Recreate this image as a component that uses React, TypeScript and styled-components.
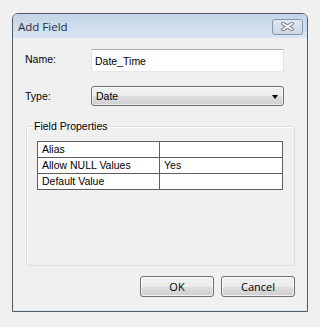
import React from 'react';
import styled, { createGlobalStyle } from 'styled-components';

const GlobalStyle = createGlobalStyle`
  html, body {
    margin: 0;
    padding: 0;
    background: #f0f0f0;
  }
  body {
    width: 320px;
    height: 327px;
    overflow: hidden;
    font-family: "Liberation Sans", Arial, sans-serif;
  }
`;

const Page = styled.div`
  padding: 13px 12px 0 12px;
`;

const Window = styled.div`
  width: 296px;
  height: 299px;
  box-sizing: border-box;
  border: 1px solid #555b64;
  border-radius: 6px 6px 0 0;
  background: #f0f0f0;
  display: flex;
  flex-direction: column;
  box-shadow: inset 0 -1px 0 #dbe5f0;
`;

const TitleBar = styled.div`
  height: 24px;
  flex: none;
  display: flex;
  align-items: center;
  justify-content: space-between;
  padding: 0 4px 0 5px;
  border-radius: 5px 5px 0 0;
  background: linear-gradient(#c3d3e5, #dae5f2);
`;

const Title = styled.span`
  font-family: "Open Sans", "Noto Sans", sans-serif;
  font-size: 11.5px;
  color: #1f2d3f;
  padding-top: 1px;
`;

const CloseButton = styled.div`
  width: 31px;
  height: 16px;
  box-sizing: border-box;
  margin-top: 1px;
  border: 1px solid #8595ad;
  border-radius: 3px;
  background: linear-gradient(#dfe7f1, #cbd7e6);
  display: flex;
  align-items: center;
  justify-content: center;
`;

const Content = styled.div`
  flex: 1;
  display: flex;
  flex-direction: column;
  padding: 11px 12px 14px 12px;
`;

const FieldRow = styled.div<{ $gap?: number }>`
  display: flex;
  align-items: flex-start;
  margin-bottom: ${p => p.$gap ?? 0}px;
`;

const Label = styled.div`
  width: 66px;
  flex: none;
  padding-top: 4px;
  font-size: 10.5px;
  color: #000;
`;

const TextInput = styled.div`
  width: 193px;
  height: 23px;
  box-sizing: border-box;
  border: 1px solid;
  border-color: #abadb3 #dbdfe6 #e3e9ef #e2e3ea;
  background: #fff;
  padding: 0 3px;
  display: flex;
  align-items: center;
  font-size: 10.5px;
  color: #000;
`;

const Select = styled.div`
  width: 193px;
  height: 20px;
  box-sizing: border-box;
  border: 1px solid #707070;
  border-radius: 3px;
  background: linear-gradient(#f2f2f2 0%, #ebebeb 50%, #dddddd 51%, #cfcfcf 100%);
  box-shadow: inset 0 0 0 1px rgba(255, 255, 255, 0.6);
  padding: 0 5px 0 4px;
  display: flex;
  align-items: center;
  justify-content: space-between;
  font-size: 10.5px;
  color: #000;
`;

const Arrow = styled.span`
  width: 0;
  height: 0;
  border-left: 3.5px solid transparent;
  border-right: 3.5px solid transparent;
  border-top: 4px solid #000;
  margin-top: 2px;
`;

const GroupBox = styled.fieldset`
  flex: 1;
  margin: 14px 0 0 1px;
  padding: 0 11px 0 10px;
  border: 1px solid #d5dfe5;
  border-radius: 3px;
  box-shadow: inset 1px 1px 0 #fff;
  min-width: 0;
`;

const Legend = styled.legend`
  margin-left: -4px;
  padding: 0 1px;
  font-size: 10.5px;
  line-height: 13px;
  color: #000;
`;

const PropTable = styled.table`
  margin-top: 8px;
  width: 246px;
  border-collapse: collapse;
  background: #fff;
  font-size: 10.5px;
`;

const Cell = styled.td<{ $w?: number }>`
  border: 1px solid #5f5f5f;
  height: 15px;
  padding: 0 3px 0 4px;
  line-height: 15px;
  width: ${p => (p.$w ? `${p.$w}px` : 'auto')};
  color: #000;
`;

const ButtonRow = styled.div`
  display: flex;
  justify-content: flex-end;
  gap: 7px;
  margin-top: 10px;
`;

const Button = styled.div`
  width: 74px;
  height: 21px;
  box-sizing: border-box;
  border: 1px solid #707070;
  border-radius: 3px;
  background: linear-gradient(#f2f2f2 0%, #ebebeb 50%, #dddddd 51%, #cfcfcf 100%);
  box-shadow: inset 0 0 0 1px rgba(255, 255, 255, 0.7);
  display: flex;
  align-items: center;
  justify-content: center;
  font-family: "Open Sans", "Noto Sans", sans-serif;
  font-size: 11px;
  color: #000;
`;

const rows = [
  { name: 'Alias', value: '' },
  { name: 'Allow NULL Values', value: 'Yes' },
  { name: 'Default Value', value: '' },
];

const CloseIcon = () => (
  <svg width="13" height="9" viewBox="0 0 13 9">
    <path d="M2 1.5 L11 7.5 M11 1.5 L2 7.5" stroke="#6a7383" strokeWidth="3.6" strokeLinecap="round" />
    <path d="M2 1.5 L11 7.5 M11 1.5 L2 7.5" stroke="#ffffff" strokeWidth="1.8" strokeLinecap="round" />
  </svg>
);

const App: React.FC = () => {
  return (
    <Page>
      <GlobalStyle />
      <Window>
        <TitleBar>
          <Title>Add Field</Title>
          <CloseButton>
            <CloseIcon />
          </CloseButton>
        </TitleBar>
        <Content>
          <FieldRow $gap={14}>
            <Label>Name:</Label>
            <TextInput>Date_Time</TextInput>
          </FieldRow>
          <FieldRow>
            <Label>Type:</Label>
            <Select>
              <span>Date</span>
              <Arrow />
            </Select>
          </FieldRow>
          <GroupBox>
            <Legend>Field Properties</Legend>
            <PropTable>
              <tbody>
                {rows.map(r => (
                  <tr key={r.name}>
                    <Cell $w={114}>{r.name}</Cell>
                    <Cell>{r.value}</Cell>
                  </tr>
                ))}
              </tbody>
            </PropTable>
          </GroupBox>
          <ButtonRow>
            <Button>OK</Button>
            <Button>Cancel</Button>
          </ButtonRow>
        </Content>
      </Window>
    </Page>
  );
};

export default App;
